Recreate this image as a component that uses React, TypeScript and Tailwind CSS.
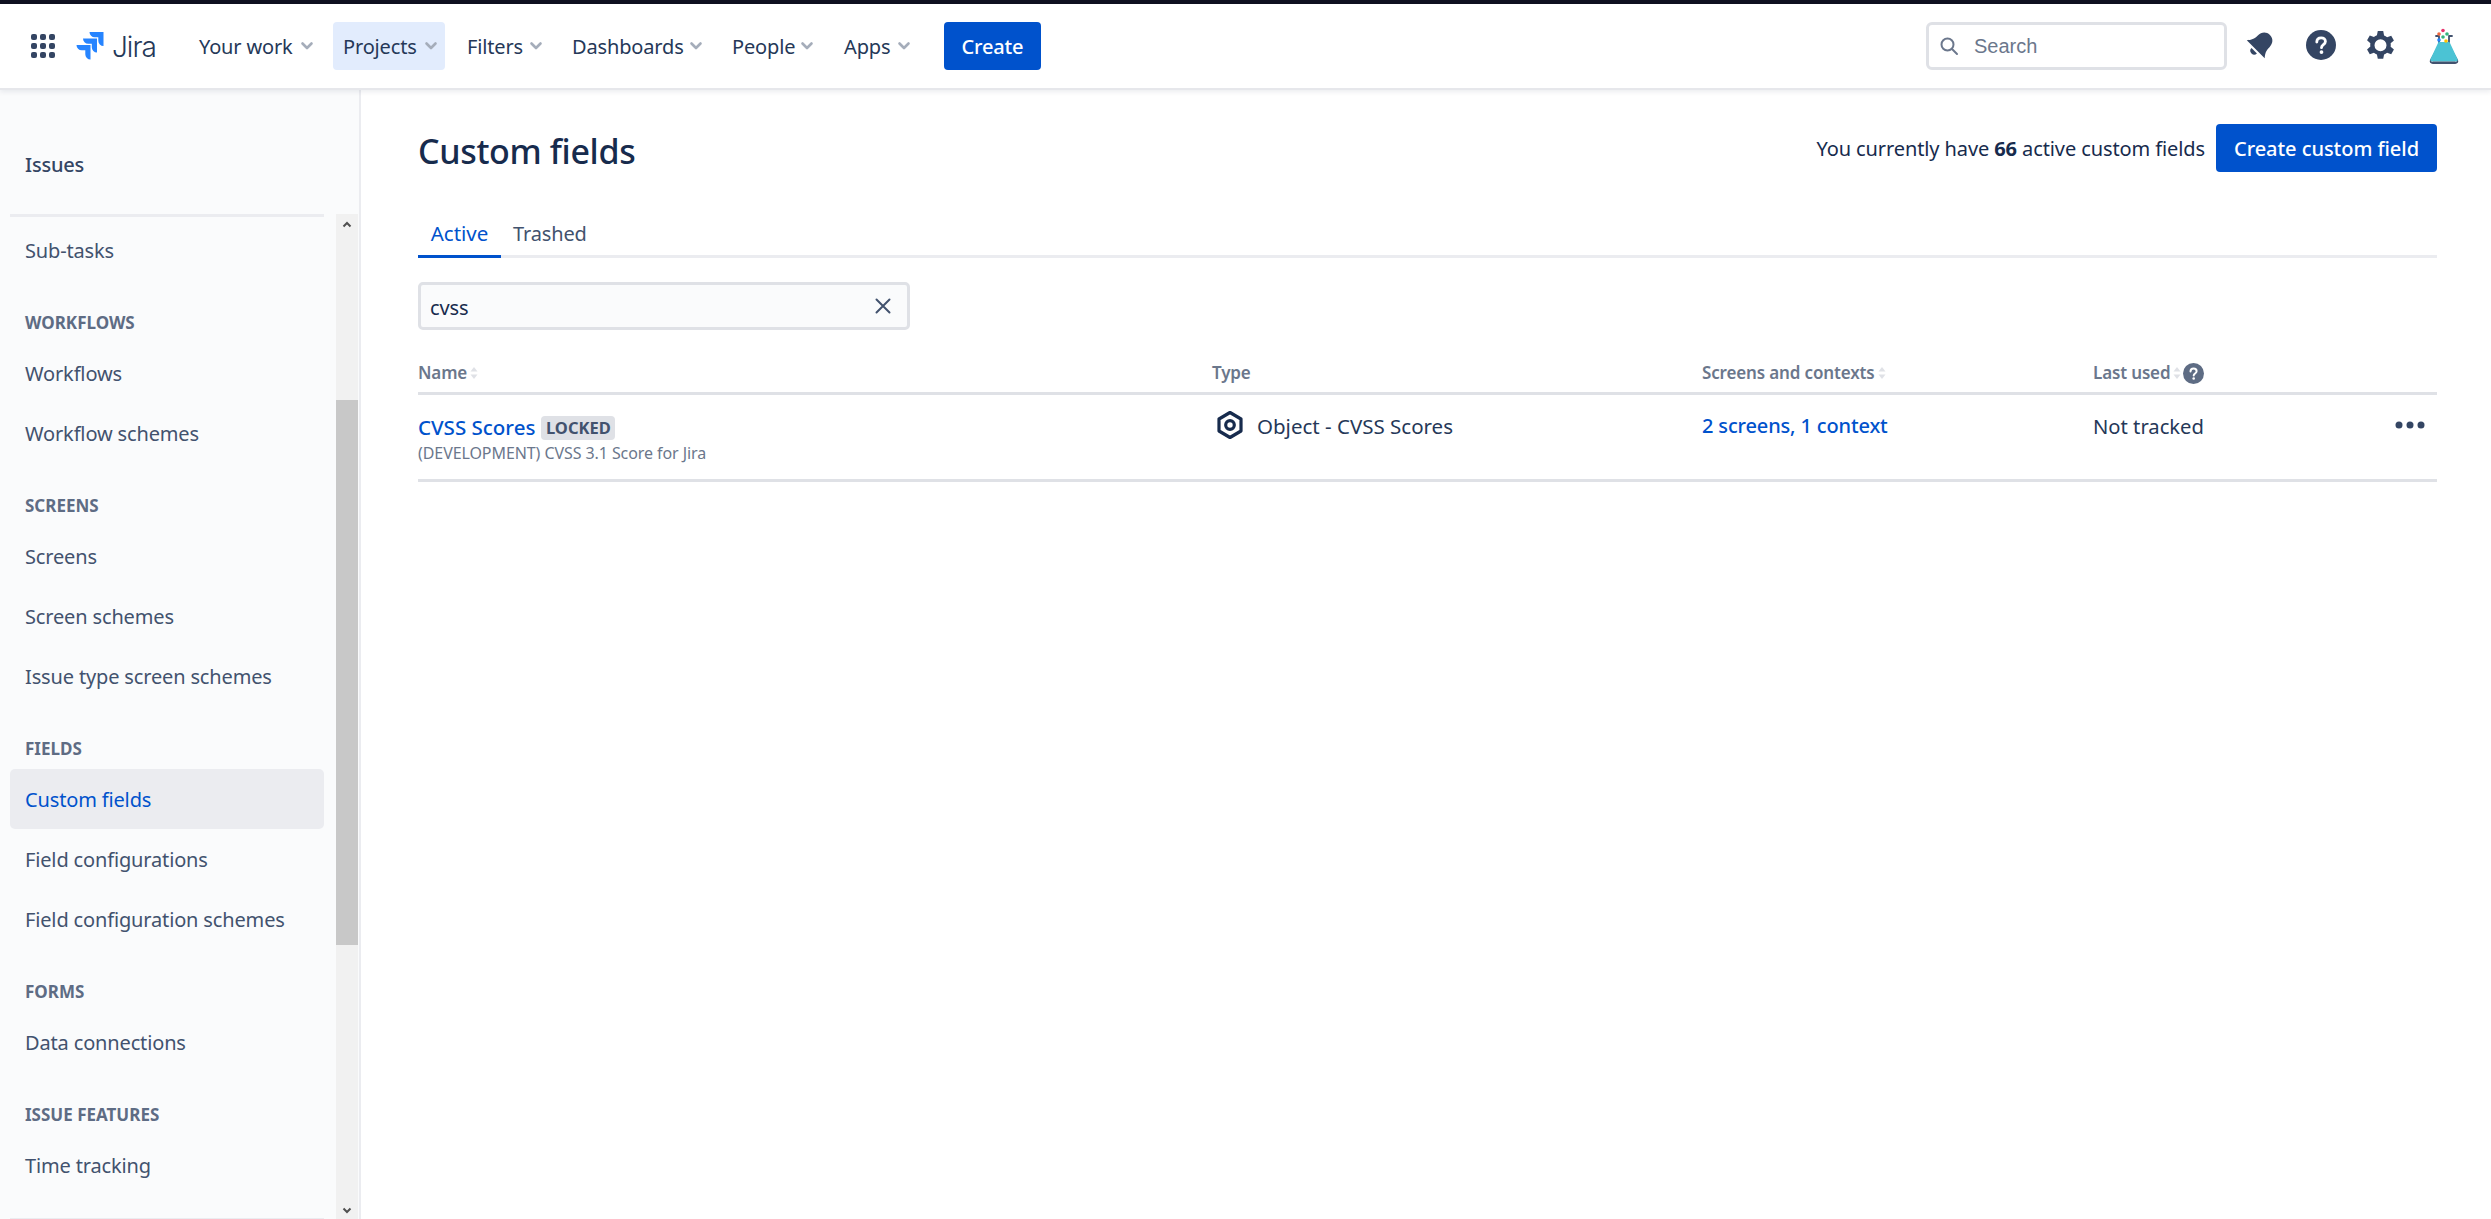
const F = "font-['Noto_Sans',sans-serif]";
const BODY = "text-[20px] tracking-[-0.15px]";

function Chevron() {
  return (
    <svg width="14" height="14" viewBox="0 0 14 14" className="shrink-0">
      <path d="M2.500 4.500 7 9l4.500-4.500" fill="none" stroke="#A5ADBA" strokeWidth="2.600" strokeLinecap="round" strokeLinejoin="round" />
    </svg>
  );
}

function NavItem({ label, active, w }: { label: string; active?: boolean; w: string }) {
  return (
    <div className={`flex h-[48px] items-center justify-between rounded-[4px] pr-[7px] pl-[10px] text-[#253858] ${BODY} ${w} ${active ? "bg-[#E2ECFD]" : ""}`}>
      <span className="pt-[1px]">{label}</span>
      <Chevron />
    </div>
  );
}

function Sort() {
  return (
    <svg width="8" height="14" viewBox="0 0 8 14" className="ml-[3px] shrink-0">
      <path d="M4 1 7.500 5.500h-7z" fill="#DFE1E6" />
      <path d="M4 13 .5 8.500h7z" fill="#DFE1E6" />
    </svg>
  );
}

function Head({ children }: { children: string }) {
  return <h3 className="pt-[33px] pb-[10px] pl-[25px] text-[17px] leading-[20px] font-bold text-[#5E6C84]">{children}</h3>;
}

function Item({ children, active }: { children: string; active?: boolean }) {
  return (
    <div className={`mx-[10px] flex h-[60px] w-[314px] shrink-0 items-center rounded-[5px] pt-[1.500px] pl-[15px] ${BODY} ${active ? "bg-[#EBECF0] text-[#0052CC]" : "text-[#42526E]"}`}>
      {children}
    </div>
  );
}

function JiraLogo() {
  return (
    <svg width="28" height="28" viewBox="0 0 28 28" className="shrink-0">
      <path d="M13.500 0H27.500V14a5.200 5.200 0 0 1-5.200-5.200V5.200H18.700A5.200 5.200 0 0 1 13.500 0z" fill="#2684FF" />
      <path d="M7 6.500H21V20.500a5.200 5.200 0 0 1-5.200-5.200V11.700H12.200A5.200 5.200 0 0 1 7 6.500z" fill="#2684FF" />
      <path d="M.5 13H14.500V27.500a5.200 5.200 0 0 1-5.200-5.200V18.200H5.700A5.200 5.200 0 0 1 .5 13z" fill="#2684FF" />
    </svg>
  );
}

function Flask() {
  return (
    <svg width="32" height="36" viewBox="0 0 32 36" className="shrink-0">
      <path d="M8 8h3v10L3 32c-1 2 0 3 2 3h22c2 0 3-1 2-3l-8-14V8h3" fill="none" stroke="#42526E" strokeWidth="1.800" strokeLinecap="round" strokeLinejoin="round" />
      <path d="M10.500 14h11l8 17c.6 1.500-.3 2.500-2 2.500h-23c-1.700 0-2.600-1-2-2.500z" fill="#4BC3D4" />
      <rect x="4" y="33.500" width="24" height="2" rx="1" fill="#42526E" />
      <circle cx="15" cy="2.500" r="1.800" fill="#E8336D" />
      <circle cx="11" cy="6" r="1.800" fill="#F0673C" />
      <circle cx="19" cy="6" r="1.800" fill="#36B37E" />
      <circle cx="15" cy="9" r="1.800" fill="#36B37E" />
      <circle cx="11" cy="12" r="1.800" fill="#2684FF" />
      <circle cx="18" cy="13" r="1.800" fill="#FFC400" />
    </svg>
  );
}

export default function App() {
  return (
    <div className={`flex h-[1219px] w-[2491px] flex-col overflow-hidden bg-white ${F}`}>
      <div className="h-[4px] shrink-0 bg-[#0F1020]" />
      <header className="relative z-10 flex h-[86px] shrink-0 items-start border-b-[2px] border-[#E6E7EB] bg-white shadow-[0_2px_5px_rgba(9,30,66,0.08)]">
        <div className="mt-[30px] ml-[31px] grid h-[24px] w-[24px] grid-cols-3 gap-[3.500px]">
          {Array.from({ length: 9 }).map((_, i) => (
            <div key={i} className="rounded-[2px] bg-[#344563]" />
          ))}
        </div>
        <div className="mt-[28px] ml-[21px]"><JiraLogo /></div>
        <div className="mt-[21px] ml-[8px] w-[77px] font-['Inter',sans-serif] text-[28px] leading-[44px] font-light tracking-[-1px] text-[#253858]">Jira</div>
        <nav className="mt-[18px] flex items-center">
          <NavItem label="Your work" w="w-[132px] mr-[12px]" />
          <NavItem label="Projects" active w="w-[112px] mr-[12px]" />
          <NavItem label="Filters" w="w-[93px] mr-[12px]" />
          <NavItem label="Dashboards" w="w-[148px] mr-[12px]" />
          <NavItem label="People" w="w-[99px] mr-[13px]" />
          <NavItem label="Apps" w="w-[84px]" />
        </nav>
        <button className="mt-[18px] ml-[26px] h-[48px] w-[97px] rounded-[4px] bg-[#0052CC] pt-[1px] text-[20px] font-medium tracking-[-0.15px] text-white">Create</button>
        <div className="mt-[18px] ml-auto flex h-[48px] w-[301px] items-center rounded-[6px] border-[3px] border-[#DFE1E6] pl-[10px] font-['Liberation_Sans',sans-serif] text-[20px] text-[#6B778C]">
          <svg width="20" height="20" viewBox="0 0 20 20" className="shrink-0">
            <circle cx="8.500" cy="8.500" r="6" fill="none" stroke="#6B778C" strokeWidth="2" />
            <path d="m13 13 5 5" stroke="#6B778C" strokeWidth="2" strokeLinecap="round" />
          </svg>
          <span className="ml-[15px]">Search</span>
        </div>
        <svg width="33" height="33" viewBox="-1 -1 26 26" className="mt-[24px] ml-[17px] shrink-0">
          <g transform="rotate(45 12 12)" fill="#344563">
            <path d="M12 1.500C7.800 1.500 5.500 4.700 5.500 8.500c0 4-1 6-3.500 8.800h20c-2.500-2.800-3.500-4.800-3.500-8.800 0-3.800-2.300-7-6.500-7z" />
            <path d="M9 19a3 3 0 0 0 6 0z" />
          </g>
        </svg>
        <svg width="30" height="30" viewBox="0 0 32 32" className="mt-[26px] ml-[29px] shrink-0">
          <circle cx="16" cy="16" r="16" fill="#344563" />
          <path d="M11.500 12.800c0-2.800 2-4.500 4.700-4.500 2.700 0 4.500 1.700 4.500 4 0 3.400-4.200 3.300-4.200 6.500" fill="none" stroke="#fff" strokeWidth="3" strokeLinecap="round" />
          <circle cx="16.500" cy="23.500" r="2" fill="#fff" />
        </svg>
        <svg width="29" height="30" viewBox="2 1.500 20 21" className="mt-[26px] ml-[30px] shrink-0">
          <path fillRule="evenodd" d="M13.900 1.500h-3.800l-.6 3a7.800 7.800 0 0 0-2.100 1.200l-2.900-1L2.600 8l2.300 2a7.800 7.800 0 0 0 0 2.400l-2.300 2 1.900 3.300 2.900-1A7.800 7.800 0 0 0 9.500 18l.6 3h3.800l.6-3a7.800 7.800 0 0 0 2.100-1.200l2.900 1 1.900-3.300-2.300-2a7.800 7.800 0 0 0 0-2.400l2.300-2-1.900-3.300-2.900 1a7.800 7.800 0 0 0-2.100-1.200zM12 7.200a4.200 4.200 0 1 1 0 8.400 4.200 4.200 0 0 1 0-8.400z" fill="#344563" transform="translate(0 .7)" />
        </svg>
        <div className="mt-[24px] mr-[31px] ml-[33px]"><Flask /></div>
      </header>

      <div className="flex min-h-0 flex-1">
        <aside className="flex w-[361px] shrink-0 flex-col overflow-hidden border-r-[2px] border-[#EBECF0] bg-[#FAFBFC]">
          <div className="flex h-[124px] shrink-0 items-center pt-[26px] pl-[25px] text-[20px] font-medium tracking-[-0.2px] text-[#344563]">Issues</div>
          <div className="flex min-h-0 flex-1">
            <div className="relative min-w-0 flex-1 overflow-hidden">
              <div className="mx-[10px] h-[3px] w-[314px] bg-[#EBECF0]" />
              <div className="h-[3px]" />
              <Item>Sub-tasks</Item>
              <Head>WORKFLOWS</Head>
              <Item>Workflows</Item>
              <Item>Workflow schemes</Item>
              <Head>SCREENS</Head>
              <Item>Screens</Item>
              <Item>Screen schemes</Item>
              <Item>Issue type screen schemes</Item>
              <Head>FIELDS</Head>
              <Item active>Custom fields</Item>
              <Item>Field configurations</Item>
              <Item>Field configuration schemes</Item>
              <Head>FORMS</Head>
              <Item>Data connections</Item>
              <Head>ISSUE FEATURES</Head>
              <Item>Time tracking</Item>
              <Item>Issue linking</Item>
              <div className="absolute bottom-0 left-[10px] h-[1px] w-[314px] bg-[#EBECF0]" />
            </div>
            <div className="mr-[1px] flex w-[22px] shrink-0 flex-col bg-[#F1F1F1]">
              <div className="flex h-[186px] shrink-0 justify-center pt-[6px]">
                <svg width="10" height="10" viewBox="0 0 10 10"><path d="M1.500 6.500 5 3l3.500 3.500" fill="none" stroke="#505050" strokeWidth="2" /></svg>
              </div>
              <div className="h-[545px] shrink-0 bg-[#C8C8C8]" />
              <div className="flex flex-1 items-end justify-center pb-[4px]">
                <svg width="10" height="10" viewBox="0 0 10 10"><path d="M1.500 3.500 5 7l3.500-3.500" fill="none" stroke="#505050" strokeWidth="2" /></svg>
              </div>
            </div>
          </div>
        </aside>

        <main className="min-w-0 flex-1 pt-[34px] pr-[54px] pl-[57px]">
          <div className="flex h-[48px] items-center justify-between">
            <h1 className="pt-[5px] text-[34px] leading-[48px] font-medium tracking-[-0.35px] text-[#172B4D]">Custom fields</h1>
            <div className="flex items-center">
              <span className="pt-[2px] text-[20px] tracking-[-0.1px] text-[#172B4D]">You currently have <b>66</b> active custom fields</span>
              <button className="ml-[11px] h-[48px] w-[221px] rounded-[4px] bg-[#0052CC] pt-[2px] text-[20px] font-medium tracking-[-0.05px] text-white">Create custom field</button>
            </div>
          </div>
          <div className="mt-[38px] flex h-[48px] border-b-[3px] border-[#EBECF0]">
            <div className="-mb-[3px] flex h-[48px] w-[83px] items-center justify-center border-b-[3px] border-[#0052CC] pt-[1px] text-[20.500px] text-[#0052CC]">Active</div>
            <div className={`flex h-[45px] items-center pt-[3px] pl-[12px] text-[#42526E] ${BODY}`}>Trashed</div>
          </div>
          <div className="mt-[24px] flex h-[48px] w-[492px] items-center justify-between rounded-[5px] border-[3px] border-[#DFE1E6] bg-[#FAFBFC] pr-[16px] pl-[9px] text-[#172B4D]">
            <span className={`pt-[4px] ${BODY}`}>cvss</span>
            <svg width="16" height="16" viewBox="0 0 16 16"><path d="M1.500 1.500l13 13M14.500 1.500l-13 13" stroke="#42526E" strokeWidth="2" strokeLinecap="round" /></svg>
          </div>
          <div className="mt-[29px] grid h-[36px] grid-cols-[794px_490px_391px_1fr] items-start border-b-[3px] border-[#DFE1E6] text-[17px] leading-[28px] font-semibold tracking-[-0.15px] text-[#6B778C]">
            <div className="flex items-center">Name<Sort /></div>
            <div>Type</div>
            <div className="flex items-center">Screens and contexts<Sort /></div>
            <div className="flex items-center">Last used<Sort />
              <svg width="21" height="21" viewBox="0 0 21 21" className="ml-[2px]">
                <circle cx="10.500" cy="10.500" r="10.500" fill="#5E6C84" />
                <path d="M7.500 8.500c0-1.800 1.300-3 3.100-3 1.800 0 3 1.200 3 2.700 0 2.300-2.900 2.200-2.900 4.300" fill="none" stroke="#fff" strokeWidth="2" strokeLinecap="round" />
                <circle cx="10.700" cy="15.500" r="1.300" fill="#fff" />
              </svg>
            </div>
          </div>
          <div className="grid h-[87px] grid-cols-[794px_490px_391px_1fr] border-b-[3px] border-[#DFE1E6]">
            <div className="pt-[21px]">
              <div className="flex h-[24px] items-center">
                <span className="pb-[2px] text-[20.500px] font-medium text-[#0052CC]">CVSS Scores</span>
                <span className="ml-[6px] flex h-[24px] w-[74px] items-center justify-center rounded-[4px] bg-[#DFE1E6] text-[16.500px] font-bold text-[#42526E]">LOCKED</span>
              </div>
              <div className="mt-[1px] text-[16px] leading-[24px] tracking-[-0.08px] text-[#6B778C]">(DEVELOPMENT) CVSS 3.1 Score for Jira</div>
            </div>
            <div className="flex items-start pt-[15px]">
              <svg width="28" height="30" viewBox="0 0 28 30" className="ml-[4px] shrink-0">
                <path d="M14 2.500 25 9v12L14 27.500 3 21V9z" fill="none" stroke="#172B4D" strokeWidth="3.200" strokeLinejoin="round" />
                <circle cx="14" cy="15" r="4.300" fill="none" stroke="#172B4D" strokeWidth="3.200" />
              </svg>
              <span className="mt-[1px] ml-[13px] text-[20.500px] leading-[30px] text-[#253858]">Object - CVSS Scores</span>
            </div>
            <div className={`pt-[16px] leading-[30px] font-medium text-[#0052CC] ${BODY}`}>2 screens, 1 context</div>
            <div className="flex items-start justify-between pt-[16px] pr-[12px] text-[20.200px] leading-[30px] text-[#253858]">
              <span>Not tracked</span>
              <svg width="30" height="8" viewBox="0 0 30 8" className="mt-[10px]">
                <circle cx="4" cy="4" r="3.500" fill="#344563" />
                <circle cx="15" cy="4" r="3.500" fill="#344563" />
                <circle cx="26" cy="4" r="3.500" fill="#344563" />
              </svg>
            </div>
          </div>
        </main>
      </div>
    </div>
  );
}
